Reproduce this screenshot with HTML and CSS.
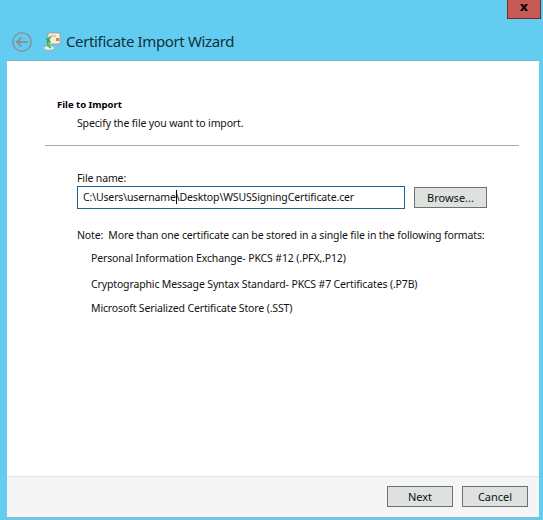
FILE: index.html
```html
<!DOCTYPE html>
<html lang="en">
<head>
<meta charset="utf-8">
<title>Certificate Import Wizard</title>
<link rel="stylesheet" href="styles.css">
</head>
<body>
<div class="window">
  <div class="titlebar"><div class="close">x</div></div>
  <header class="wizard-head">
    <svg class="back" width="22" height="22" viewBox="0 0 22 22" aria-hidden="true">
      <circle cx="11" cy="11" r="9.2" fill="none" stroke="#84959f" stroke-width="1.6"/>
      <path d="M5.5 11H17M10.5 6.5 6 11l4.5 4.5" fill="none" stroke="#84959f" stroke-width="2.2"/>
    </svg>
    <svg class="cert" width="18" height="20" viewBox="0 0 18 20" aria-hidden="true">
      <rect x="5" y="1" width="12" height="11" fill="#f4efe2" stroke="#a89a80" stroke-width=".8"/>
      <rect x="13" y="6" width="3" height="3" fill="#d98a1c"/>
      <path d="M7 4h6" stroke="#c9a98a"/>
      <path d="M5 12c-1-3 0-6 3-7M3 7l3 1 1 3" fill="none" stroke="#3fa83a" stroke-width="1.6"/>
      <ellipse cx="6" cy="16" rx="5.5" ry="2.4" fill="#e9f2ee" stroke="#8d9aa0" stroke-width=".7"/>
      <path d="M4 13l4 3" stroke="#3fc24a" stroke-width="1.6"/>
    </svg>
    <h1 class="wizard-title">Certificate Import Wizard</h1>
  </header>
  <main class="panel">
    <div class="content">
      <section class="page-head">
        <h2 class="page-title">File to Import</h2>
        <p class="page-sub">Specify the file you want to import.</p>
      </section>
      <hr class="rule">
      <section class="form">
        <label class="field-label">File name:</label>
        <div class="field-row">
          <div class="input">C:\Users\username<span class="caret"></span>\Desktop\WSUSSigningCertificate.cer</div>
          <button class="btn browse">Browse...</button>
        </div>
        <p class="note">Note:&nbsp; More than one certificate can be stored in a single file in the following formats:</p>
        <ul class="formats">
          <li>Personal Information Exchange- PKCS #12 (.PFX,.P12)</li>
          <li>Cryptographic Message Syntax Standard- PKCS #7 Certificates (.P7B)</li>
          <li>Microsoft Serialized Certificate Store (.SST)</li>
        </ul>
      </section>
    </div>
    <footer class="footer">
      <button class="btn wide">Next</button>
      <button class="btn wide">Cancel</button>
    </footer>
  </main>
</div>
</body>
</html>
```

FILE: styles.css
```css
* { box-sizing: border-box; }
html, body { margin: 0; padding: 0; }
body {
  width: 543px;
  height: 520px;
  overflow: hidden;
  background: #62cdf0;
  font-family: "Noto Sans", "Open Sans", sans-serif;
  font-size: 10.5px;
  letter-spacing: -0.14px;
  color: #111;
}
.window { display: flex; flex-direction: column; height: 517px; padding: 0 4px 0 7px; }
.titlebar { display: flex; justify-content: flex-end; height: 19px; margin-right: -2px; flex: none; }
.close {
  width: 34px;
  height: 19px;
  background: #c75a55;
  border: 1px solid #6b2f2a;
  border-top: 0;
  color: #000;
  font: bold 13px/13px "DejaVu Sans", sans-serif;
  letter-spacing: 0;
  text-align: center;
}
.wizard-head { display: flex; align-items: center; height: 41px; flex: none; padding: 4px 0 0 4px; }
.back { margin-right: 10px; }
.cert { margin-right: 5px; }
.wizard-title { margin: -2px 0 0; font-size: 15px; letter-spacing: -0.36px; font-weight: 400; color: #12303c; }
.panel {
  flex: 1;
  display: flex;
  flex-direction: column;
  background: #fff;
  border-top: 1px solid #7fb4c8;
  box-shadow: 0 1px 1px #8fb8c8;
}
.content { flex: 1; padding: 0 20px 0 38px; }
.page-head { padding: 37px 0 0 12px; height: 84px; }
.page-title { margin: 0; font-size: 9.5px; letter-spacing: 0; line-height: 14px; font-weight: 700; color: #000; }
.page-sub { margin: 4px 0 0 20px; line-height: 14px; }
.rule { margin: 0; border: 0; border-top: 1px solid #a8a8a8; }
.form { padding: 25px 0 0 32px; }
.field-label { display: block; line-height: 14px; }
.field-row { display: flex; align-items: center; gap: 9px; margin-top: 1px; }
.input {
  width: 328px;
  height: 23px;
  border: 1px solid #1f6392;
  padding: 0 0 0 5px;
  line-height: 20px;
  white-space: nowrap;
}
.caret { display: inline-block; width: 1px; height: 14px; background: #000; margin-right: -1px; vertical-align: -3px; }
.btn {
  background: #dde2df;
  border: 1px solid #707070;
  font: inherit;
  font-size: 11px;
  letter-spacing: 0;
  color: #111;
  padding: 0;
  height: 21px;
}
.browse { width: 73px; }
.note { margin: 19px 0 0; line-height: 14px; }
.formats { list-style: none; margin: 9px 0 0; padding: 0 0 0 14px; }
.formats li { line-height: 14px; margin-bottom: 10px; }
.formats li:first-child { margin-bottom: 12px; }
.footer {
  display: flex;
  justify-content: flex-end;
  gap: 9px;
  flex: none;
  height: 41px;
  padding: 9px 11px 0 0;
  background: #f5f5f5;
  border-top: 1px solid #dfe3e3;
}
.wide { width: 66px; }
```
